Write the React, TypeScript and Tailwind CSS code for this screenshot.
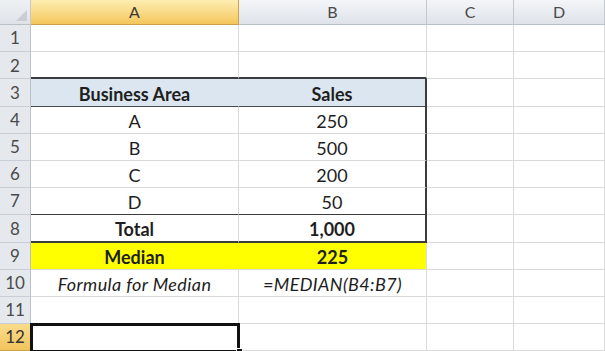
import React from "react"

const font = { fontFamily: "Lato, 'Open Sans', Arial, sans-serif" }

type Row = {
  a?: string
  b?: string
  kind?: "head" | "body" | "total" | "median" | "formula"
}

const rows: Row[] = [
  {},
  {},
  { a: "Business Area", b: "Sales", kind: "head" },
  { a: "A", b: "250", kind: "body" },
  { a: "B", b: "500", kind: "body" },
  { a: "C", b: "200", kind: "body" },
  { a: "D", b: "50", kind: "body" },
  { a: "Total", b: "1,000", kind: "total" },
  { a: "Median", b: "225", kind: "median" },
  { a: "Formula for Median", b: "=MEDIAN(B4:B7)", kind: "formula" },
  {},
  {},
]

function ColHeader({ label, active }: { label: string; active?: boolean }) {
  return (
    <div
      className={
        "flex items-center justify-center border-r border-b text-[16px] " +
        (active
          ? "bg-gradient-to-b from-[#fdeeb0] to-[#f4c65a] border-r-[#c9a24a] border-b-[#c9a24a] text-[#3a3a3a]"
          : "bg-gradient-to-b from-[#f3f5f8] to-[#dfe3e9] border-r-[#c4c9d0] border-b-[#b9c0c9] text-[#4a4a4a]")
      }
    >
      {label}
    </div>
  )
}

export default function App() {
  return (
    <div
      className="w-[605px] h-[351px] overflow-hidden bg-white text-[#1e1e1e]"
      style={font}
    >
      <div className="grid grid-cols-[31px_208px_188px_87px_91px] grid-rows-[25px_repeat(12,27.2px)]">
        {/* corner */}
        <div className="relative border-r border-b border-r-[#c4c9d0] border-b-[#b9c0c9] bg-gradient-to-b from-[#eef1f4] to-[#dfe3e8]">
          <div className="absolute right-[3px] bottom-[3px] w-0 h-0 border-l-[11px] border-l-transparent border-b-[11px] border-b-[#c9ced5]" />
        </div>
        <ColHeader label="A" active />
        <ColHeader label="B" />
        <ColHeader label="C" />
        <ColHeader label="D" />

        {rows.map((r, i) => {
          const n = i + 1
          const selected = n === 12
          const k = r.kind

          // row header
          const rh = (
            <div
              key={"h" + n}
              className={
                "flex items-center justify-center border-r border-b text-[17px] " +
                (selected
                  ? "bg-gradient-to-b from-[#f9dc8a] to-[#f2c45c] border-r-[#c9a24a] border-b-[#c9a24a] text-[#333]"
                  : "bg-[#e5e9ee] border-r-[#b9c0c9] border-b-[#c9ced6] text-[#4a4a4a]")
              }
            >
              {n}
            </div>
          )

          // borders for table area
          let aCls = "border-r border-b border-r-[#dadada] border-b-[#dadada]"
          let bCls = "border-r border-b border-r-[#dadada] border-b-[#dadada]"
          if (n === 2) {
            aCls = "border-r border-b-2 border-r-[#dadada] border-b-[#3c3c3c]"
            bCls = "border-r border-b-2 border-r-[#dadada] border-b-[#3c3c3c]"
          }
          if (k === "head") {
            aCls = "border-r border-b border-r-[#dce6f1] border-b-[#4a4a4a] bg-[#dce6f1] font-bold"
            bCls = "border-r-2 border-b border-r-[#3c3c3c] border-b-[#4a4a4a] bg-[#dce6f1] font-bold"
          }
          if (k === "body") {
            bCls = "border-r-2 border-b border-r-[#3c3c3c] border-b-[#dadada]"
            if (n === 7) {
              aCls = "border-r border-b border-r-[#dadada] border-b-[#3c3c3c]"
              bCls = "border-r-2 border-b border-r-[#3c3c3c] border-b-[#3c3c3c]"
            }
          }
          if (k === "total") {
            aCls = "border-r border-b-2 border-r-[#dadada] border-b-[#3c3c3c] font-bold"
            bCls = "border-r-2 border-b-2 border-r-[#3c3c3c] border-b-[#3c3c3c] font-bold"
          }
          if (k === "median") {
            aCls = "border-r border-b border-r-[#ffff00] border-b-[#dadada] bg-[#ffff00] font-bold"
            bCls = "border-r border-b border-r-[#dadada] border-b-[#dadada] bg-[#ffff00] font-bold"
          }
          if (k === "formula") {
            aCls += " italic tracking-[0.4px]"
            bCls += " italic tracking-[0.4px]"
          }

          const cellBase = "flex items-end justify-center pb-[1px] text-[18px] leading-[22px]"
          const plain = "border-r border-b border-r-[#dadada] border-b-[#dadada]"

          return (
            <React.Fragment key={n}>
              {rh}
              <div className={cellBase + " " + aCls + (selected ? " relative" : "")}>
                {r.a}
                {selected && (
                  <>
                    <div className="absolute -left-px -top-px w-[210px] h-[30px] border-[3px] border-[#111]" />
                    <div className="absolute right-[-5px] bottom-[-5px] w-[7px] h-[7px] bg-[#111] border border-white" />
                  </>
                )}
              </div>
              <div className={cellBase + " " + bCls}>{r.b}</div>
              <div className={plain} />
              <div className={plain} />
            </React.Fragment>
          )
        })}
      </div>
    </div>
  )
}
